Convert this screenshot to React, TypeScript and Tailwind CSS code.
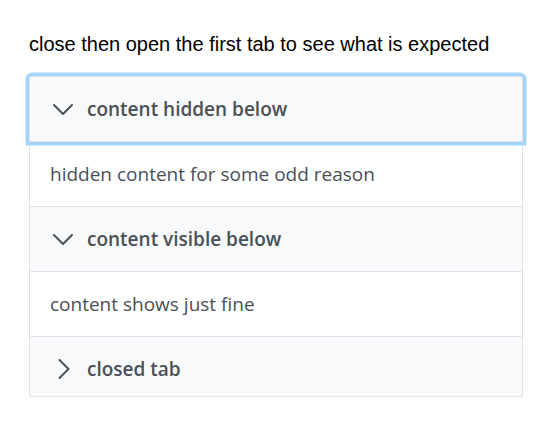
import React from "react";

function ChevronDown() {
  return (
    <svg width="24" height="24" viewBox="0 0 24 24" fill="none" className="shrink-0">
      <path d="M3 8 L12 17 L21 8" stroke="#495057" strokeWidth="2" strokeLinecap="round" strokeLinejoin="round" />
    </svg>
  );
}

function ChevronRight() {
  return (
    <svg width="24" height="24" viewBox="0 0 24 24" fill="none" className="shrink-0">
      <path d="M8.5 3 L17.5 12 L8.5 21" stroke="#495057" strokeWidth="2" strokeLinecap="round" strokeLinejoin="round" />
    </svg>
  );
}

export default function App() {
  return (
    <div className="min-h-[426px] bg-white pt-[33px]" style={{ fontFamily: '"Open Sans", sans-serif' }}>
      <p className="ml-[29px] text-[20px] leading-[normal] text-black" style={{ fontFamily: '"Liberation Sans", Arial, sans-serif' }}>
        close then open the first tab to see what is expected
      </p>
      <div className="ml-[29px] mt-[20px] w-[494px] text-[19px] text-[#495057]">
        <div className="relative z-10 flex items-center rounded-t-[3px] border border-[#dee2e6] bg-[#f8f9fa] py-5 pl-[21px] pr-5 font-semibold leading-[22px] shadow-[0_0_0_3.5px_#a6d5fa]">
          <ChevronDown />
          <span className="ml-3">content hidden below</span>
        </div>
        <div className="border-x border-b border-[#dee2e6] bg-white px-5 py-5 leading-[24px]">
          hidden content for some odd reason
        </div>
        <div className="flex items-center border-x border-b border-[#dee2e6] bg-[#f8f9fa] py-5 pl-[21px] pr-5 font-semibold leading-[19px]">
          <ChevronDown />
          <span className="ml-3">content visible below</span>
        </div>
        <div className="border-x border-b border-[#dee2e6] bg-white px-5 py-5 leading-[24px]">
          content shows just fine
        </div>
        <div className="flex items-center rounded-b-[3px] border-x border-b border-[#dee2e6] bg-[#f8f9fa] pb-[15px] pl-[21px] pr-5 pt-5 font-semibold leading-[18px]">
          <ChevronRight />
          <span className="ml-3">closed tab</span>
        </div>
      </div>
    </div>
  );
}
